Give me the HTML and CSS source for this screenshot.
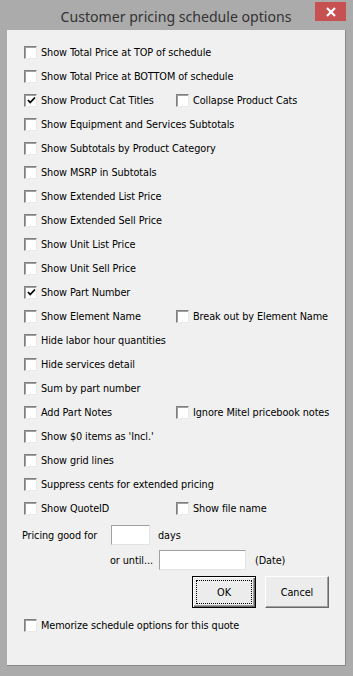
FILE: index.html
```html
<!DOCTYPE html>
<html>
<head>
<meta charset="utf-8">
<link rel="stylesheet" href="styles.css">
</head>
<body>
<div class="window">
  <div class="titlebar">
    <div class="title">Customer pricing schedule options</div>
    <div class="close">
      <svg width="12" height="10" viewBox="0 0 12 10"><path d="M2 1 L10 9 M10 1 L2 9" stroke="#fff" stroke-width="2.2"/></svg>
    </div>
  </div>
  <div class="client">
    <div class="rows">
      <div class="row"><label class="cb"><span class="box"></span>Show Total Price at TOP of schedule</label></div>
      <div class="row"><label class="cb"><span class="box"></span>Show Total Price at BOTTOM of schedule</label></div>
      <div class="row"><label class="cb col1"><span class="box checked"><svg width="9" height="9" viewBox="0 0 9 9"><path d="M1 4 L3.2 6.5 L8 1.5" fill="none" stroke="#000" stroke-width="1.8"/></svg></span>Show Product Cat Titles</label><label class="cb"><span class="box"></span>Collapse Product Cats</label></div>
      <div class="row"><label class="cb"><span class="box"></span>Show Equipment and Services Subtotals</label></div>
      <div class="row"><label class="cb"><span class="box"></span>Show Subtotals by Product Category</label></div>
      <div class="row"><label class="cb"><span class="box"></span>Show MSRP in Subtotals</label></div>
      <div class="row"><label class="cb"><span class="box"></span>Show Extended List Price</label></div>
      <div class="row"><label class="cb"><span class="box"></span>Show Extended Sell Price</label></div>
      <div class="row"><label class="cb"><span class="box"></span>Show Unit List Price</label></div>
      <div class="row"><label class="cb"><span class="box"></span>Show Unit Sell Price</label></div>
      <div class="row"><label class="cb"><span class="box checked"><svg width="9" height="9" viewBox="0 0 9 9"><path d="M1 4 L3.2 6.5 L8 1.5" fill="none" stroke="#000" stroke-width="1.8"/></svg></span>Show Part Number</label></div>
      <div class="row"><label class="cb col1"><span class="box"></span>Show Element Name</label><label class="cb"><span class="box"></span>Break out by Element Name</label></div>
      <div class="row"><label class="cb"><span class="box"></span>Hide labor hour quantities</label></div>
      <div class="row"><label class="cb"><span class="box"></span>Hide services detail</label></div>
      <div class="row"><label class="cb"><span class="box"></span>Sum by part number</label></div>
      <div class="row"><label class="cb col1"><span class="box"></span>Add Part Notes</label><label class="cb"><span class="box"></span>Ignore Mitel pricebook notes</label></div>
      <div class="row"><label class="cb"><span class="box"></span>Show $0 items as 'Incl.'</label></div>
      <div class="row"><label class="cb"><span class="box"></span>Show grid lines</label></div>
      <div class="row"><label class="cb"><span class="box"></span>Suppress cents for extended pricing</label></div>
      <div class="row"><label class="cb col1"><span class="box"></span>Show QuoteID</label><label class="cb"><span class="box"></span>Show file name</label></div>
    </div>
    <div class="pricing">
      <span class="plabel">Pricing good for</span>
      <span class="input days-input"></span>
      <span class="days">days</span>
    </div>
    <div class="until">
      <span class="ulabel">or until...</span>
      <span class="input date-input"></span>
      <span class="date">(Date)</span>
    </div>
    <div class="buttons">
      <div class="btn default"><span class="focus">OK</span></div>
      <div class="btn">Cancel</div>
    </div>
    <div class="memo">
      <label class="cb"><span class="box"></span>Memorize schedule options for this quote</label>
    </div>
  </div>
</div>
</body>
</html>
```

FILE: styles.css
```css
html, body {
  margin: 0;
  padding: 0;
}
body {
  width: 353px;
  height: 676px;
  overflow: hidden;
  background: #ababab;
  font-family: "DejaVu Sans Condensed", "DejaVu Sans", sans-serif;
  font-size: 10.8px;
  letter-spacing: -0.08px;
  color: #000;
}
.window {
  width: 353px;
  height: 676px;
  background: #ababab;
  display: flex;
  flex-direction: column;
}
.titlebar {
  height: 30px;
  position: relative;
  display: flex;
  justify-content: center;
  align-items: center;
}
.title {
  font-family: "Noto Sans", "Open Sans", sans-serif;
  font-size: 14.1px;
  letter-spacing: 0;
  color: #333;
  padding-right: 1px;
  padding-top: 3px;
}
.close {
  position: absolute;
  left: 315px;
  top: 2px;
  width: 31px;
  height: 19px;
  background: #c75050;
  display: flex;
  align-items: center;
  justify-content: center;
}
.client {
  margin-left: 7px;
  width: 338px;
  height: 635px;
  background: #f0f0f0;
  border-right: 1px solid #8a8a8a;
  border-bottom: 1px solid #8a8a8a;
  display: flex;
  flex-direction: column;
}
.rows {
  padding-top: 10px;
  display: flex;
  flex-direction: column;
}
.row {
  height: 24.02px;
  display: flex;
  align-items: center;
  padding-left: 17px;
}
.cb {
  display: flex;
  align-items: center;
  white-space: nowrap;
}
.col1 {
  width: 152px;
}
.box {
  width: 11px;
  height: 11px;
  background: #fff;
  border: 1px solid;
  border-color: #808080 #e8e8e8 #e8e8e8 #808080;
  box-shadow: inset 1px 1px 0 #a0a0a0;
  margin-right: 4px;
  display: flex;
  align-items: center;
  justify-content: center;
  flex: none;
}
.box svg {
  display: block;
  margin-left: 1px;
  margin-top: 1px;
}
.input {
  display: block;
  background: #fff;
  border: 1px solid;
  border-color: #a0a0a0 #e3e3e3 #e3e3e3 #a0a0a0;
  box-sizing: border-box;
}
.pricing {
  margin-top: 5px;
  height: 20px;
  display: flex;
  align-items: center;
  padding-left: 15px;
}
.plabel {
  width: 89px;
}
.days-input {
  width: 39px;
  height: 20px;
}
.days {
  margin-left: 8px;
}
.until {
  margin-top: 5px;
  height: 20px;
  display: flex;
  align-items: center;
  padding-left: 103px;
}
.ulabel {
  width: 49px;
}
.date-input {
  width: 87px;
  height: 20px;
}
.date {
  margin-left: 9px;
}
.buttons {
  margin-top: 6px;
  display: flex;
  padding-left: 185px;
  gap: 9px;
}
.btn {
  width: 64px;
  height: 32px;
  box-sizing: border-box;
  background: #ececec;
  border: 1px solid;
  border-color: #fff #696969 #696969 #fff;
  box-shadow: inset -1px -1px 0 #a0a0a0;
  display: flex;
  align-items: center;
  justify-content: center;
}
.btn.default {
  border: 1px solid #000;
  box-shadow: inset 1px 1px 0 #fff, inset -1px -1px 0 #696969, inset -2px -2px 0 #a0a0a0;
  padding: 3px;
}
.focus {
  flex: 1;
  align-self: stretch;
  border: 1px dotted #000;
  display: flex;
  align-items: center;
  justify-content: center;
}
.memo {
  margin-top: 5px;
  height: 24px;
  display: flex;
  align-items: center;
  padding-left: 17px;
}
```
